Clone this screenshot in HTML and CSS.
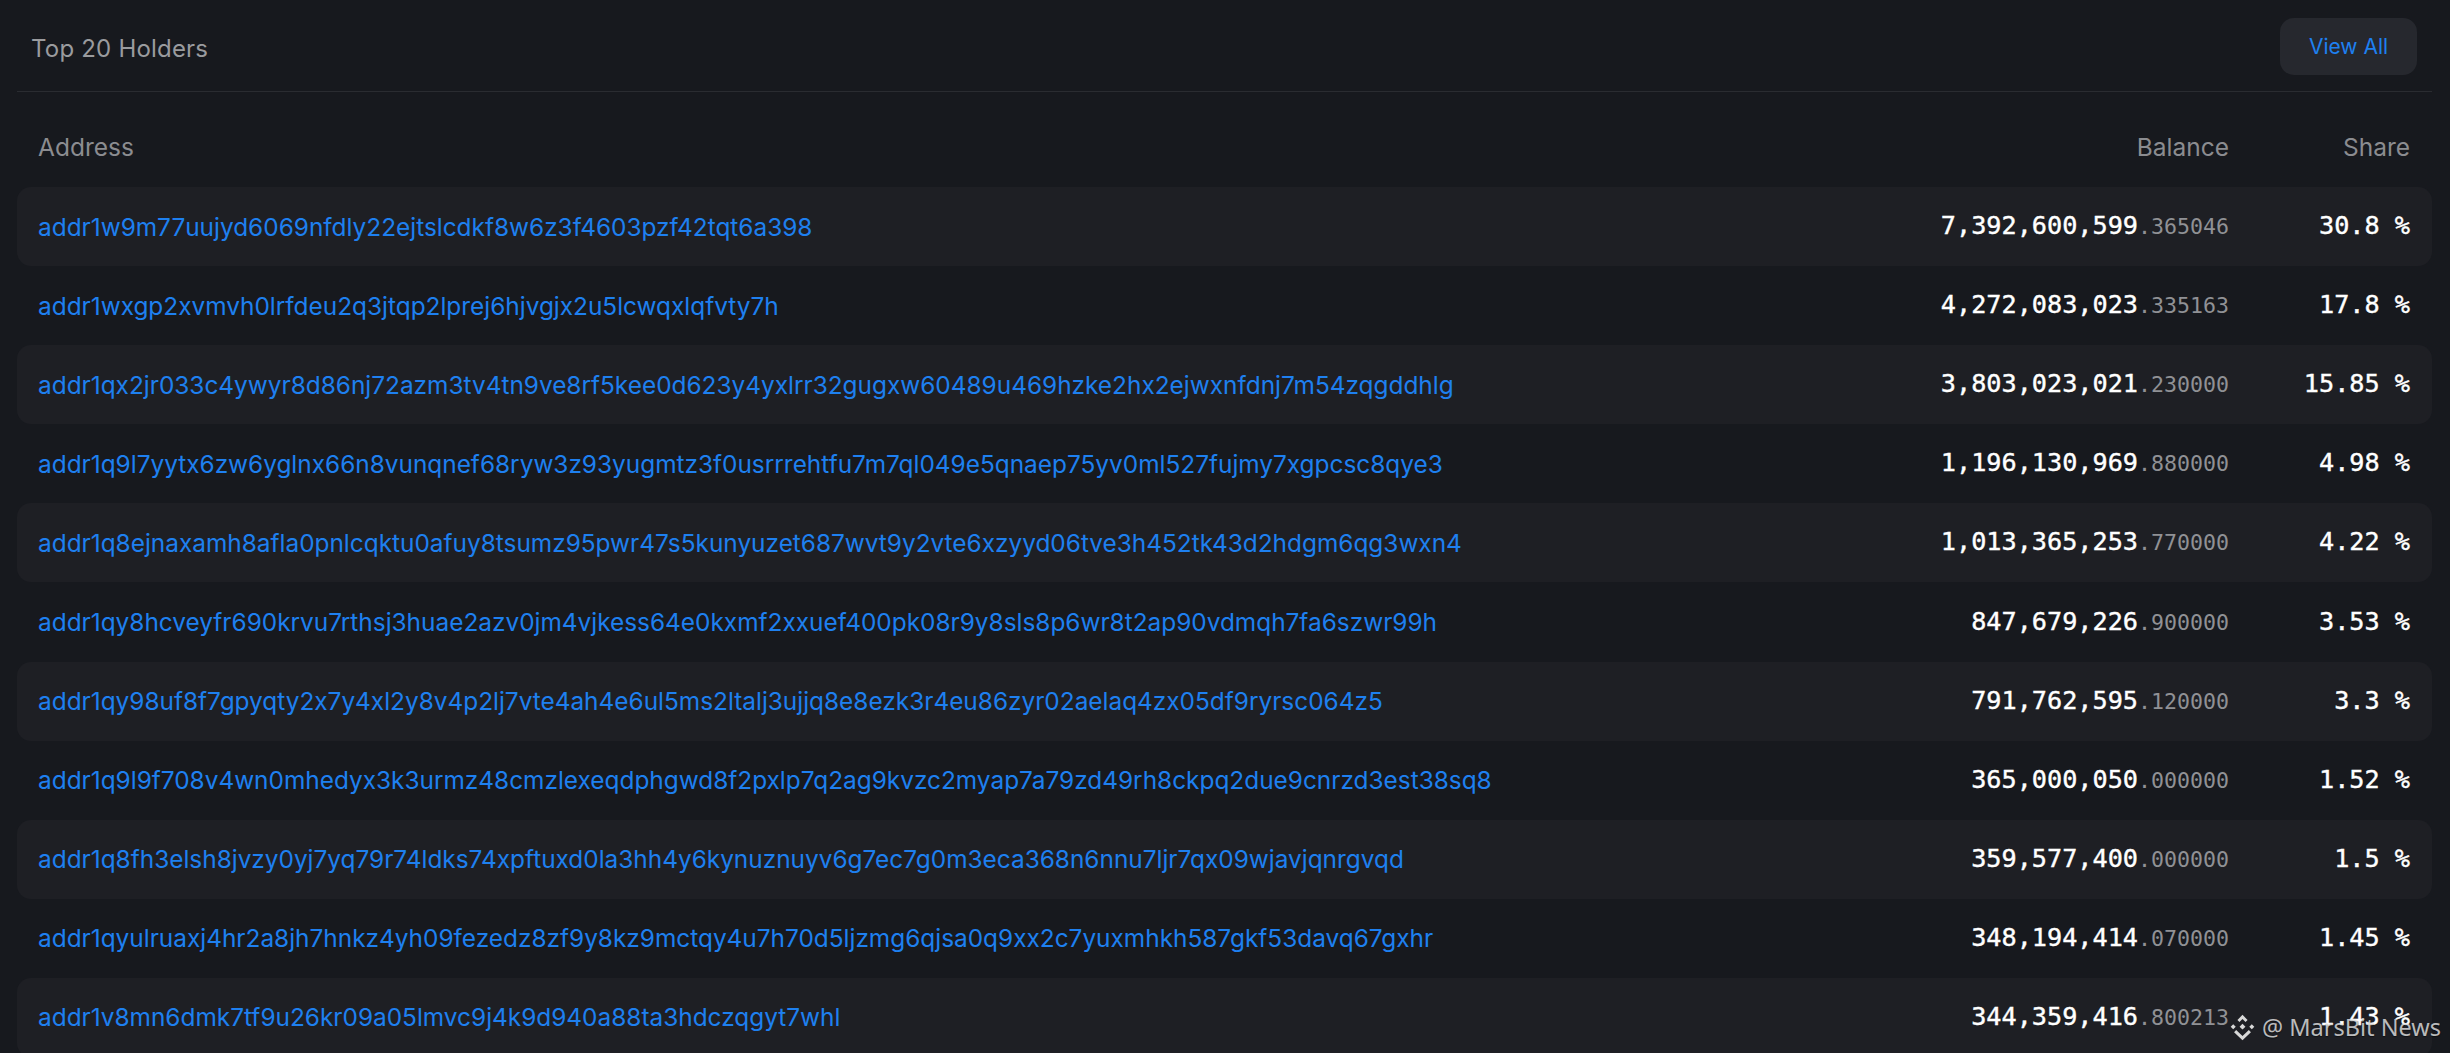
FILE: index.html
```html
<!DOCTYPE html>
<html lang="en">
<head>
<meta charset="utf-8">
<title>Top 20 Holders</title>
<link rel="stylesheet" href="styles.css">
</head>
<body>
<main class="panel">
  <header class="panel-head">
    <h2 class="panel-title">Top 20 Holders</h2>
    <a class="view-all" href="#">View All</a>
  </header>
  <div class="cols">
    <span class="col-addr">Address</span>
    <span class="col-bal">Balance</span>
    <span class="col-share">Share</span>
  </div>
  <div class="rows">
    <div class="row"><a class="col-addr addr" href="#">addr1w9m77uujyd6069nfdly22ejtslcdkf8w6z3f4603pzf42tqt6a398</a><span class="col-bal num">7,392,600,599<small>.365046</small></span><span class="col-share num">30.8 %</span></div>
    <div class="row"><a class="col-addr addr" href="#">addr1wxgp2xvmvh0lrfdeu2q3jtqp2lprej6hjvgjx2u5lcwqxlqfvty7h</a><span class="col-bal num">4,272,083,023<small>.335163</small></span><span class="col-share num">17.8 %</span></div>
    <div class="row"><a class="col-addr addr" href="#">addr1qx2jr033c4ywyr8d86nj72azm3tv4tn9ve8rf5kee0d623y4yxlrr32gugxw60489u469hzke2hx2ejwxnfdnj7m54zqgddhlg</a><span class="col-bal num">3,803,023,021<small>.230000</small></span><span class="col-share num">15.85 %</span></div>
    <div class="row"><a class="col-addr addr" href="#">addr1q9l7yytx6zw6yglnx66n8vunqnef68ryw3z93yugmtz3f0usrrrehtfu7m7ql049e5qnaep75yv0ml527fujmy7xgpcsc8qye3</a><span class="col-bal num">1,196,130,969<small>.880000</small></span><span class="col-share num">4.98 %</span></div>
    <div class="row"><a class="col-addr addr" href="#">addr1q8ejnaxamh8afla0pnlcqktu0afuy8tsumz95pwr47s5kunyuzet687wvt9y2vte6xzyyd06tve3h452tk43d2hdgm6qg3wxn4</a><span class="col-bal num">1,013,365,253<small>.770000</small></span><span class="col-share num">4.22 %</span></div>
    <div class="row"><a class="col-addr addr" href="#">addr1qy8hcveyfr690krvu7rthsj3huae2azv0jm4vjkess64e0kxmf2xxuef400pk08r9y8sls8p6wr8t2ap90vdmqh7fa6szwr99h</a><span class="col-bal num">847,679,226<small>.900000</small></span><span class="col-share num">3.53 %</span></div>
    <div class="row"><a class="col-addr addr" href="#">addr1qy98uf8f7gpyqty2x7y4xl2y8v4p2lj7vte4ah4e6ul5ms2ltalj3ujjq8e8ezk3r4eu86zyr02aelaq4zx05df9ryrsc064z5</a><span class="col-bal num">791,762,595<small>.120000</small></span><span class="col-share num">3.3 %</span></div>
    <div class="row"><a class="col-addr addr" href="#">addr1q9l9f708v4wn0mhedyx3k3urmz48cmzlexeqdphgwd8f2pxlp7q2ag9kvzc2myap7a79zd49rh8ckpq2due9cnrzd3est38sq8</a><span class="col-bal num">365,000,050<small>.000000</small></span><span class="col-share num">1.52 %</span></div>
    <div class="row"><a class="col-addr addr" href="#">addr1q8fh3elsh8jvzy0yj7yq79r74ldks74xpftuxd0la3hh4y6kynuznuyv6g7ec7g0m3eca368n6nnu7ljr7qx09wjavjqnrgvqd</a><span class="col-bal num">359,577,400<small>.000000</small></span><span class="col-share num">1.5 %</span></div>
    <div class="row"><a class="col-addr addr" href="#">addr1qyulruaxj4hr2a8jh7hnkz4yh09fezedz8zf9y8kz9mctqy4u7h70d5ljzmg6qjsa0q9xx2c7yuxmhkh587gkf53davq67gxhr</a><span class="col-bal num">348,194,414<small>.070000</small></span><span class="col-share num">1.45 %</span></div>
    <div class="row"><a class="col-addr addr" href="#">addr1v8mn6dmk7tf9u26kr09a05lmvc9j4k9d940a88ta3hdczqgyt7whl</a><span class="col-bal num">344,359,416<small>.800213</small></span><span class="col-share num">1.43 %</span></div>
  </div>
</main>
<div class="watermark">
  <svg class="wm-logo" viewBox="0 0 32 32" aria-hidden="true"><path d="M16 1l6 6-2.400 2.400L16 5.800l-3.600 3.600L10 7zM16 11.500l3.500 3.500-3.500 3.500-3.500-3.500zM5 12l3 3-3 3-3-3zM27 12l3 3-3 3-3-3zM8.500 19l7.500 7 7.500-7 2.500 2.500L16 31 6 21.500z"/></svg>
  <span class="wm-text">@ MarsBit News</span>
</div>
</body>
</html>
```
FILE: styles.css
```css
* { box-sizing: border-box; }
html, body { margin: 0; height: 100%; }
body {
  background: #17191e;
  color: #fff;
  font-family: "Inter", "Liberation Sans", sans-serif;
  font-feature-settings: "calt" 0;
  overflow: hidden;
  position: relative;
}
.panel { padding: 0 18px 0 17px; }
.panel-head {
  display: flex;
  align-items: center;
  justify-content: space-between;
  height: 92px;
  padding: 5px 15px 0 14px;
  border-bottom: 1px solid #2a2c31;
}
.panel-title {
  margin: 0;
  font-size: 24px;
  font-weight: 400;
  color: #9a9b9e;
  letter-spacing: 0.2px;
}
.view-all {
  display: flex;
  align-items: center;
  justify-content: center;
  width: 137px;
  height: 57px;
  margin-top: -3px;
  border-radius: 14px;
  background: #26282e;
  color: #1e80f0;
  font-size: 21px;
  text-decoration: none;
}
.cols {
  display: flex;
  align-items: center;
  height: 95px;
  padding: 15px 22px 0 0;
  font-size: 24.500px;
  color: #8b8c90;
}
.col-addr { flex: 1; padding-left: 21px; }
.col-bal { width: 400px; text-align: right; }
.col-share { width: 181px; text-align: right; }
.row {
  display: flex;
  align-items: center;
  height: 79.1px;
  padding-right: 22px;
  border-radius: 14px;
}
.row:nth-child(odd) { background: #1e1f24; }
.addr {
  color: #1e80f0;
  font-size: 24.400px;
  text-decoration: none;
  white-space: nowrap;
}
.num {
  padding-bottom: 2px;
  font-family: "DejaVu Sans Mono", monospace;
  font-size: 25.2px;
  color: #fff;
  white-space: nowrap;
  -webkit-text-stroke: 0.4px #fff;
}
.num small {
  font-size: 21.6px;
  color: #909195;
  -webkit-text-stroke: 0;
}
.watermark {
  position: absolute;
  right: 9px;
  top: 1007px;
  display: flex;
  align-items: center;
  gap: 6px;
  color: rgba(235, 235, 235, 0.78);
  font-family: "Noto Sans", sans-serif;
  font-size: 23.500px;
  line-height: 40px;
  white-space: nowrap;
  text-shadow: 0 1px 1px rgba(0, 0, 0, 0.5);
}
.wm-logo { width: 27px; height: 29px; fill: #d8d8d8; flex: none; }
```
